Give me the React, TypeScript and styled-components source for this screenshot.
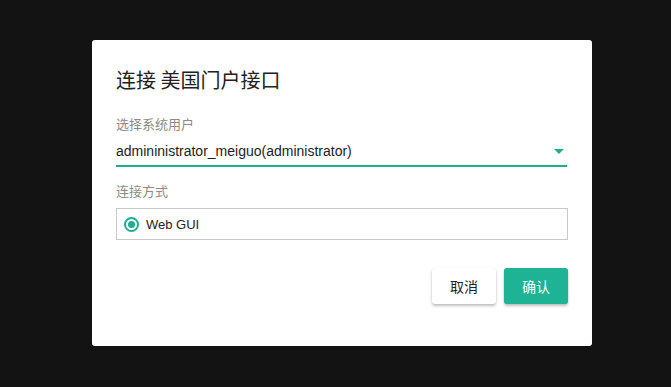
import React from "react";
import styled, { createGlobalStyle } from "styled-components";

const Global = createGlobalStyle`
  html, body { margin: 0; padding: 0; background: #131313; }
  body { font-family: "Liberation Sans", Arial, "Noto Sans CJK SC", sans-serif; }
`;

const Page = styled.div`
  width: 671px;
  height: 387px;
  display: flex;
  padding: 40px 0 0 92px;
  box-sizing: border-box;
  background: #131313;
`;

const Dialog = styled.div`
  width: 500px;
  height: 306px;
  background: #fff;
  border-radius: 3px;
  box-sizing: border-box;
  padding: 24px 24px 0 24px;
  display: flex;
  flex-direction: column;
`;

const Title = styled.h2`
  margin: 0;
  font-family: "Noto Sans CJK SC", sans-serif;
  font-weight: 400;
  font-size: 20px;
  line-height: 31px;
  color: #222;
`;

const Label = styled.div<{ $top: number }>`
  margin-top: ${(p) => p.$top}px;
  font-family: "Noto Sans CJK SC", sans-serif;
  font-size: 13px;
  line-height: 18px;
  color: #8a8a8a;
`;

const Select = styled.div`
  margin-top: 6px;
  height: 26px;
  display: flex;
  align-items: center;
  justify-content: space-between;
  border-bottom: 2px solid #1fae8f;
  margin-right: 1px;
`;

const SelectText = styled.span`
  font-family: "Liberation Sans", Arial, sans-serif;
  font-size: 14px;
  color: #1d1d1d;
  padding-bottom: 3px;
`;

const Caret = styled.span`
  width: 0;
  height: 0;
  border-left: 5px solid transparent;
  border-right: 5px solid transparent;
  border-top: 5px solid #1fae8f;
  margin-right: 3px;
  margin-bottom: 2px;
`;

const OptionBox = styled.div`
  margin-top: 8px;
  height: 32px;
  box-sizing: border-box;
  border: 1px solid #c9c9c9;
  display: flex;
  align-items: center;
  padding-left: 7px;
  gap: 7px;
`;

const Radio = styled.span`
  width: 15px;
  height: 15px;
  border-radius: 50%;
  box-sizing: border-box;
  border: 2px solid #1fae8f;
  display: flex;
  align-items: center;
  justify-content: center;
  &::after {
    content: "";
    width: 7px;
    height: 7px;
    border-radius: 50%;
    background: #1fae8f;
  }
`;

const OptionText = styled.span`
  font-family: "Liberation Sans", Arial, sans-serif;
  font-size: 13px;
  color: #222;
`;

const Actions = styled.div`
  margin-top: 28px;
  display: flex;
  justify-content: flex-end;
  gap: 8px;
`;

const Button = styled.button<{ $primary?: boolean }>`
  width: 64px;
  height: 36px;
  border: none;
  border-radius: 3px;
  font-family: "Noto Sans CJK SC", sans-serif;
  font-size: 14px;
  cursor: pointer;
  background: ${(p) => (p.$primary ? "#1db394" : "#fff")};
  color: ${(p) => (p.$primary ? "#fff" : "#222")};
  box-shadow: 0 2px 3px rgba(0, 0, 0, 0.25), 0 0 1px rgba(0, 0, 0, 0.12);
`;

export default function App() {
  return (
    <>
      <Global />
      <Page>
        <Dialog>
          <Title>连接 美国门户接口</Title>
          <Label $top={20}>选择系统用户</Label>
          <Select>
            <SelectText>admininistrator_meiguo(administrator)</SelectText>
            <Caret />
          </Select>
          <Label $top={15}>连接方式</Label>
          <OptionBox>
            <Radio />
            <OptionText>Web GUI</OptionText>
          </OptionBox>
          <Actions>
            <Button>取消</Button>
            <Button $primary>确认</Button>
          </Actions>
        </Dialog>
      </Page>
    </>
  );
}
